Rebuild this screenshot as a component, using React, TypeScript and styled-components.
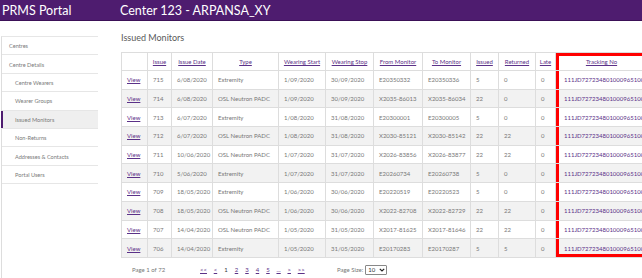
import React from 'react'
import styled, { createGlobalStyle } from 'styled-components'

const GlobalStyle = createGlobalStyle`
    html, body {
        margin: 0;
        padding: 0;
        background: #ffffff;
        overflow: hidden;
    }
    body {
        font-family: Lato, "Open Sans", "Liberation Sans", sans-serif;
        color: #777777;
    }
`

const purple = '#4e1c6f'
const linkPurple = '#5b3188'

const Page = styled.div`
    width: 642px;
    height: 278px;
    overflow: hidden;
`

const TopBar = styled.header`
    height: 21px;
    background: ${purple};
    display: flex;
    align-items: center;
    color: #ffffff;
    font-size: 12.5px;
    border-bottom: 1px solid #3b1157;
    box-sizing: border-box;
`

const Brand = styled.div`
    width: 120px;
    padding-left: 2px;
    box-sizing: border-box;
`

const CenterName = styled.div``

const Body = styled.div`
    display: flex;
`

const SideNav = styled.nav`
    width: 96px;
    margin-top: 15px;
    border-left: 1px solid #dddddd;
    border-top: 1px solid #e6e6e6;
    margin-left: 1px;
    flex-shrink: 0;
`

const NavItem = styled.div<{ $sub?: boolean; $active?: boolean }>`
    height: 18.4px;
    box-sizing: border-box;
    display: flex;
    align-items: center;
    font-size: 5.6px;
    color: #7a7a7a;
    border-bottom: 1px solid #e6e6e6;
    background: ${p => (p.$active ? '#efefef' : 'transparent')};
    box-shadow: ${p => (p.$active ? `inset 2px 0 0 ${purple}` : 'none')};
    margin-left: ${p => (p.$active ? '-1px' : '0')};
    padding-left: ${p => (p.$sub ? (p.$active ? '14px' : '13px') : '7px')};
`

const Main = styled.main`
    margin-left: 23px;
    flex-shrink: 0;
`

const Title = styled.h1`
    margin: 0;
    height: 31px;
    line-height: 34px;
    font-size: 9px;
    font-weight: normal;
    color: #5a5a5a;
`

const Table = styled.table`
    border-collapse: separate;
    border-spacing: 0;
    table-layout: fixed;
    border-top: 1px solid #dddddd;
    border-left: 1px solid #dddddd;
    font-size: 6px;
`

const HeadCell = styled.th<{ $track?: boolean }>`
    height: 18px;
    box-sizing: border-box;
    padding: 0 3px;
    font-weight: normal;
    text-align: center;
    color: ${linkPurple};
    text-decoration: underline;
    border-right: 1px solid #dddddd;
    border-bottom: 1px solid #dddddd;
    white-space: nowrap;
    box-shadow: ${p => (p.$track ? 'inset 3px 0 0 #f00, inset 0 3px 0 #f00, inset -3px 0 0 #f00' : 'none')};
`

const Row = styled.tr<{ $alt: boolean }>`
    height: 18.7px;
    background: ${p => (p.$alt ? '#f2f2f2' : '#ffffff')};
`

const Cell = styled.td<{ $track?: boolean; $last?: boolean }>`
    border-right: 1px solid #dddddd;
    border-bottom: 1px solid #dddddd;
    white-space: nowrap;
    overflow: hidden;
    color: ${p => (p.$track ? linkPurple : '#777777')};
    padding: 0 5px 0 ${p => (p.$track ? '8px' : '5px')};
    box-shadow: ${p =>
        p.$track
            ? p.$last
                ? 'inset 3px 0 0 #f00, inset -3px 0 0 #f00, inset 0 -3px 0 #f00'
                : 'inset 3px 0 0 #f00, inset -3px 0 0 #f00'
            : 'none'};
`

const Link = styled.a`
    color: ${linkPurple};
    text-decoration: underline;
`

const Pager = styled.div`
    display: flex;
    align-items: center;
    height: 24px;
    padding-left: 11px;
    font-size: 6px;
    color: #777777;
`

const PageInfo = styled.span`
    flex: 0 0 68px;
`

const PageLinks = styled.div`
    display: flex;
    gap: 6.5px;
    flex: 0 0 137px;
`

const PageLink = styled.a<{ $current?: boolean }>`
    color: ${p => (p.$current ? '#333333' : linkPurple)};
    text-decoration: ${p => (p.$current ? 'none' : 'underline')};
    min-width: 4px;
    text-align: center;
`

const SizeLabel = styled.span`
    margin-right: 2px;
`

const SizeBox = styled.div`
    display: flex;
    align-items: center;
    justify-content: space-between;
    width: 22px;
    height: 10px;
    box-sizing: border-box;
    padding: 0 1px 0 2px;
    border: 1px solid #888888;
    border-radius: 1px;
    background: #ffffff;
    color: #333333;
    font-size: 6px;
`

const columns = [
    { label: '', width: 26 },
    { label: 'Issue', width: 24 },
    { label: 'Issue Date', width: 41 },
    { label: 'Type', width: 66 },
    { label: 'Wearing Start', width: 47 },
    { label: 'Wearing Stop', width: 48 },
    { label: 'From Monitor', width: 49 },
    { label: 'To Monitor', width: 48 },
    { label: 'Issued', width: 28 },
    { label: 'Returned', width: 37 },
    { label: 'Late', width: 20 },
    { label: 'Tracking No', width: 92 },
]

const tracking = '111JD72723480100096510001'

const rows = [
    ['715', '6/08/2020', 'Extremity', '1/09/2020', '30/09/2020', 'E20350332', 'E20350336', '5', '0', '0'],
    ['714', '6/08/2020', 'OSL Neutron PADC', '1/09/2020', '30/09/2020', 'X2035-86013', 'X2035-86034', '22', '0', '0'],
    ['713', '6/07/2020', 'Extremity', '1/08/2020', '31/08/2020', 'E20300001', 'E20300005', '5', '0', '0'],
    ['712', '6/07/2020', 'OSL Neutron PADC', '1/08/2020', '31/08/2020', 'X2030-85121', 'X2030-85142', '22', '22', '0'],
    ['711', '10/06/2020', 'OSL Neutron PADC', '1/07/2020', '31/07/2020', 'X2026-83856', 'X2026-83877', '22', '22', '0'],
    ['710', '5/06/2020', 'Extremity', '1/07/2020', '31/07/2020', 'E20260734', 'E20260738', '5', '0', '0'],
    ['709', '18/05/2020', 'Extremity', '1/06/2020', '30/06/2020', 'E20220519', 'E20220523', '5', '0', '0'],
    ['708', '18/05/2020', 'OSL Neutron PADC', '1/06/2020', '30/06/2020', 'X2022-82708', 'X2022-82729', '22', '22', '0'],
    ['707', '14/04/2020', 'OSL Neutron PADC', '1/05/2020', '31/05/2020', 'X2017-81625', 'X2017-81646', '22', '22', '0'],
    ['706', '14/04/2020', 'Extremity', '1/05/2020', '31/05/2020', 'E20170283', 'E20170287', '5', '5', '0'],
]

const navItems = [
    { label: 'Centres' },
    { label: 'Centre Details' },
    { label: 'Centre Wearers', sub: true },
    { label: 'Wearer Groups', sub: true },
    { label: 'Issued Monitors', sub: true, active: true },
    { label: 'Non-Returns', sub: true },
    { label: 'Addresses & Contacts', sub: true },
    { label: 'Portal Users', sub: true },
]

const pages = ['<<', '<', '1', '2', '3', '4', '5', '...', '>', '>>']

const App: React.FC = () => {
    const tableWidth = columns.reduce((sum, c) => sum + c.width, 0)
    return (
        <Page>
            <GlobalStyle />
            <TopBar>
                <Brand>PRMS Portal</Brand>
                <CenterName>Center 123 - ARPANSA_XY</CenterName>
            </TopBar>
            <Body>
                <SideNav>
                    {navItems.map(item => (
                        <NavItem key={item.label} $sub={item.sub} $active={item.active}>
                            {item.label}
                        </NavItem>
                    ))}
                </SideNav>
                <Main>
                    <Title>Issued Monitors</Title>
                    <Table style={{ width: tableWidth }}>
                        <colgroup>
                            {columns.map((c, i) => (
                                <col key={i} style={{ width: c.width }} />
                            ))}
                        </colgroup>
                        <thead>
                            <tr>
                                {columns.map((c, i) => (
                                    <HeadCell key={i} $track={i === columns.length - 1}>
                                        {c.label}
                                    </HeadCell>
                                ))}
                            </tr>
                        </thead>
                        <tbody>
                            {rows.map((r, ri) => (
                                <Row key={r[0]} $alt={ri % 2 === 1}>
                                    <Cell>
                                        <Link>View</Link>
                                    </Cell>
                                    {r.map((v, ci) => (
                                        <Cell key={ci}>{v}</Cell>
                                    ))}
                                    <Cell $track $last={ri === rows.length - 1}>
                                        {tracking}
                                    </Cell>
                                </Row>
                            ))}
                        </tbody>
                    </Table>
                    <Pager>
                        <PageInfo>Page 1 of 72</PageInfo>
                        <PageLinks>
                            {pages.map(p => (
                                <PageLink key={p} $current={p === '1'}>
                                    {p}
                                </PageLink>
                            ))}
                        </PageLinks>
                        <SizeLabel>Page Size:</SizeLabel>
                        <SizeBox>
                            <span>10</span>
                            <svg width="6" height="4" viewBox="0 0 6 4">
                                <path d="M0.8 0.8 L3 3 L5.2 0.8" fill="none" stroke="#222" strokeWidth="1.2" />
                            </svg>
                        </SizeBox>
                    </Pager>
                </Main>
            </Body>
        </Page>
    )
}

export default App
